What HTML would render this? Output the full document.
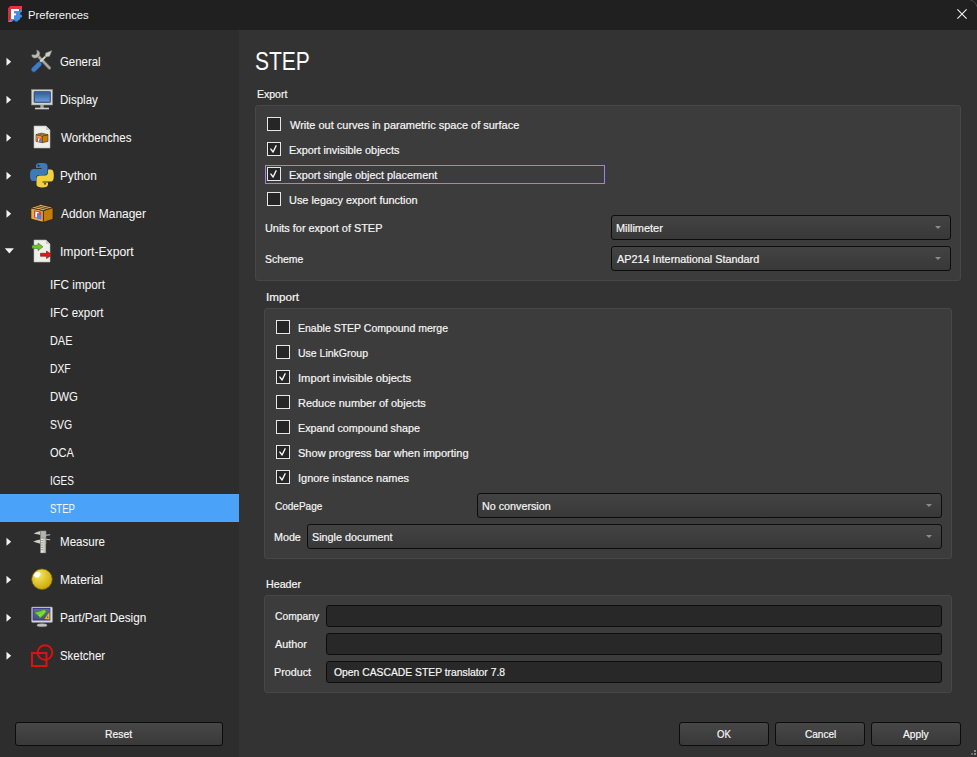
<!DOCTYPE html>
<html><head><meta charset="utf-8"><style>
*{box-sizing:border-box;margin:0;padding:0}
html,body{width:977px;height:757px;overflow:hidden;background:#333333}
body{position:relative;font-family:"Liberation Sans",sans-serif;font-size:11px;color:#f6f6f6}
.a,.btn{-webkit-text-stroke:0.2px currentColor}
.a{position:absolute;white-space:nowrap}
.t11{font-size:11px;line-height:12px}
.t12{font-size:12px;line-height:14px;-webkit-text-stroke:0.05px currentColor}
.t115{font-size:11.5px;line-height:13px}
.arr{position:absolute;width:0;height:0;border-top:4.2px solid transparent;border-bottom:4.2px solid transparent;border-left:4.8px solid #f0f0f0}
.arrd{position:absolute;width:0;height:0;border-left:4.5px solid transparent;border-right:4.5px solid transparent;border-top:5px solid #f0f0f0}
.btn{position:absolute;border:1px solid #0c0c0c;border-radius:3px;background:linear-gradient(#474747,#393939);text-align:center;color:#f0f0f0;font-size:11px}
.grp{position:absolute;border:1px solid #474747;border-radius:3px;background:#3c3c3c}
.cb{position:absolute;width:14px;height:14px;border:1.5px solid #e6e6e6;background:#262626}
.combo{position:absolute;border:1px solid #0d0d0d;border-radius:3px;background:linear-gradient(#434343,#383838)}
.dd{position:absolute;width:0;height:0;border-left:3.5px solid transparent;border-right:3.5px solid transparent;border-top:3.5px solid #8c8c8c}
.inp{position:absolute;border:1px solid #0d0d0d;border-radius:3px;background:#282828}
svg{position:absolute;overflow:visible}
</style></head><body>
<div class="a" style="left:0;top:0;width:977px;height:30px;background:#202020"></div>
<div class="a" style="left:0;top:30px;width:239px;height:727px;background:#2d2d2d"></div>
<svg style="left:6px;top:4px" width="20" height="20" viewBox="0 0 20 20">
  <path d="M2 4.5 L4.5 2 L16 2 L16 4.5 L13 7.2 L8 15 L5.6 18 L2 18 Z" fill="#e8424c"/>
  <path d="M2 4.5 L4.5 2 L4.5 18 L2 18 Z" fill="#c8343c"/>
  <path d="M4.5 2 L16 2 L13 5 L4.5 5 Z" fill="#dc3540"/>
  <path d="M2 18 L5 15 L5 18 Z" fill="#f45a62"/>
  <rect x="5" y="5" width="8" height="2.2" fill="#ffffff"/>
  <rect x="5" y="5" width="3" height="10" fill="#ffffff"/>
  <rect x="8" y="9.2" width="2.3" height="2.4" fill="#ffffff"/>
  <path d="M8 7.2 L13 7.2 L16 4.5 L16 7.8 L14.3 8.8 L14.3 10.4 L16 11.2 L16 13.2 L14.3 13.6 L14 15.6 L12.2 16.2 L11.6 17.6 L9.2 17.6 L8.6 16.2 L7.2 16.4 L5.6 18 L5 18 L5 15 L8 15 L8 11.6 L10.3 11.6 L10.3 9.2 L8 9.2 Z" fill="#3f8fe4"/>
</svg>
<div class="a t115" style="left:28.22px;top:9px;transform:scaleX(0.9790);transform-origin:0 0;color:#f2f2f2;-webkit-text-stroke:0">Preferences</div>
<svg style="left:957px;top:9px" width="10" height="10" viewBox="0 0 10 10"><path d="M0.4 0.4 L9.6 9.6 M9.6 0.4 L0.4 9.6" stroke="#f4f4f4" stroke-width="1.1"/></svg>
<svg style="left:957px;top:0px" width="20" height="20" viewBox="0 0 20 20"><path d="M13.5 0.4 A6.5 6.5 0 0 1 19.6 6.5" fill="none" stroke="#4a4a4a" stroke-width="1"/></svg>
<div class="a" style="left:974px;top:750px;width:2px;height:2px;background:#8a8a8a"></div><div class="a" style="left:971px;top:753px;width:2px;height:2px;background:#6a6a6a"></div><div class="a" style="left:974px;top:753px;width:2px;height:2px;background:#8a8a8a"></div>
<div class="a" style="left:0;top:494px;width:239px;height:28px;background:#4aa3f8"></div>
<svg width="0" height="0" style="left:0;top:0"><defs>
<linearGradient id="gDisp" x1="0" y1="0" x2="0" y2="1"><stop offset="0" stop-color="#34609c"/><stop offset="1" stop-color="#6a9ad8"/></linearGradient>
<linearGradient id="gPart" x1="0" y1="0" x2="0" y2="1"><stop offset="0" stop-color="#6c6c98"/><stop offset="1" stop-color="#4a4a88"/></linearGradient>
<radialGradient id="gMat" cx="0.35" cy="0.3" r="0.8"><stop offset="0" stop-color="#f8e860"/><stop offset="1" stop-color="#c8a000"/></radialGradient>
</defs></svg>
<svg style="left:0;top:42.0px" width="20" height="38" viewBox="0 0 20 38"><path d="M6.5 15.7 L11.2 19.75 L6.5 23.8 Z" fill="#f2f2f2"/></svg>
<svg style="left:26px;top:44px" width="32" height="36" viewBox="0 0 32 36">
<path d="M11.5 11.5 L23.5 24" stroke="#5a5a58" stroke-width="3.6" stroke-linecap="round"/>
<path d="M11.5 11.5 L23.5 24" stroke="#aaaaa4" stroke-width="2.4" stroke-linecap="round"/>
<path d="M5.5 11 C5.5 14 9 15 11.5 13.5 L13.5 11.5 C14.5 9 13.5 6.5 10.5 6 L11 9 L9.5 11 L7 10.5 Z" fill="#bdbdb6" stroke="#5a5a58" stroke-width="0.6"/>
<path d="M14 18 L21 11" stroke="#d8d8d2" stroke-width="1.8"/>
<path d="M19 13 L19.5 9 L26 6.5 L23.5 12.5 Z" fill="#cfcfc9" stroke="#6a6a66" stroke-width="0.5"/>
<path d="M7.8 25.6 L13.2 20.2" stroke="#24508a" stroke-width="5.4" stroke-linecap="round"/>
<path d="M7.8 25.6 L13.2 20.2" stroke="#3f7cc8" stroke-width="4.2" stroke-linecap="round"/>
</svg>
<div class="a t12" style="left:60.15px;top:55.0px;transform:scaleX(0.9499);transform-origin:0 0;">General</div>
<svg style="left:0;top:80.0px" width="20" height="38" viewBox="0 0 20 38"><path d="M6.5 15.7 L11.2 19.75 L6.5 23.8 Z" fill="#f2f2f2"/></svg>
<svg style="left:26px;top:82px" width="32" height="36" viewBox="0 0 32 36">
<rect x="5.5" y="7.5" width="21" height="15.5" fill="#d4d4ce" stroke="#8a8a86" stroke-width="0.6"/>
<rect x="8" y="9.5" width="16.5" height="11" rx="0.8" fill="#3a66a8" stroke="#2a3a50" stroke-width="0.6"/>
<rect x="9" y="10.5" width="14.5" height="9" fill="url(#gDisp)"/>
<rect x="14.3" y="23" width="3.4" height="3" fill="#a8a8a2"/>
<rect x="9" y="25.7" width="14" height="1.6" fill="#d0d0ca"/>
</svg>
<div class="a t12" style="left:60.14px;top:93.0px;transform:scaleX(0.9614);transform-origin:0 0;">Display</div>
<svg style="left:0;top:118.0px" width="20" height="38" viewBox="0 0 20 38"><path d="M6.5 15.7 L11.2 19.75 L6.5 23.8 Z" fill="#f2f2f2"/></svg>
<svg style="left:26px;top:120px" width="32" height="36" viewBox="0 0 32 36">
<path d="M8 6 L20 6 L24 10 L24 28 L8 28 Z" fill="#eeeeea" stroke="#b8b8b4" stroke-width="0.6"/>
<path d="M20 6 L20 10 L24 10" fill="#c8c8c4"/>
<path d="M10 14.6 L16.3 16 L16.3 22.7 L10 21.4 Z" fill="#e2a040" stroke="#3a2408" stroke-width="0.55"/>
<path d="M16.3 16 L22 14.6 L22 21.4 L16.3 22.7 Z" fill="#c47c10" stroke="#3a2408" stroke-width="0.55"/>
<path d="M10 14.6 L15.6 13.1 L22 14.6 L16.3 16 Z" fill="#e8b868" stroke="#3a2408" stroke-width="0.55"/>
<path d="M12 14 L18.5 15.4 M13.8 13.6 L20.2 15" stroke="#4a3010" stroke-width="0.5"/>
<path d="M11.2 17.4 L15.4 18.3 L15.4 22.6 L11.2 21.6 Z" fill="#e03a44"/>
<path d="M12 18.2 L14.2 18.7 L14.2 19.6 L13 19.4 L13 21.6 L12 21.4 Z" fill="#ffffff"/>
<path d="M13 19.8 L15.4 20.3 L15.4 22.6 L13 22 Z" fill="#3d8ee6"/>
</svg>
<div class="a t12" style="left:61.10px;top:131.0px;transform:scaleX(0.9635);transform-origin:0 0;">Workbenches</div>
<svg style="left:0;top:156.0px" width="20" height="38" viewBox="0 0 20 38"><path d="M6.5 15.7 L11.2 19.75 L6.5 23.8 Z" fill="#f2f2f2"/></svg>
<svg style="left:26px;top:158px" width="32" height="36" viewBox="0 0 32 36">
<path d="M10 10 L10 7.5 C10 5.5 12 5 15.5 5 C19 5 21.5 5.5 21.5 8 L21.5 14 C21.5 16 20 17 18 17 L13 17 C11 17 10 18.5 10 20.5 L10 23 L7 23 C5 23 4 21 4 17 C4 13 5 11 7.5 11 L15.5 11 L15.5 10 Z" fill="#3d7ab8"/>
<circle cx="12.6" cy="7.7" r="1" fill="#20304a"/>
<path d="M22 29 L22 26.5 C22 28.5 20 29.5 16.5 29.5 C13 29.5 10.5 28.5 10.5 26.5 L10.5 20.5 C10.5 18.5 12 17.5 14 17.5 L19 17.5 C21 17.5 22 16 22 14 L22 11.5 L25 11.5 C27 11.5 27.8 13.5 27.8 17.5 C27.8 21.5 27 23.5 24.5 23.5 L16.5 23.5 L16.5 24.5 L22 24.5 Z" fill="#f3d040"/>
<circle cx="19" cy="25.8" r="1" fill="#5a4a10"/>
</svg>
<div class="a t12" style="left:60.12px;top:169.0px;transform:scaleX(0.9837);transform-origin:0 0;">Python</div>
<svg style="left:0;top:194.0px" width="20" height="38" viewBox="0 0 20 38"><path d="M6.5 15.7 L11.2 19.75 L6.5 23.8 Z" fill="#f2f2f2"/></svg>
<svg style="left:26px;top:196px" width="32" height="36" viewBox="0 0 32 36">
<path d="M4.9 11.8 L17.4 14.6 L17.4 26.3 L4.9 23 Z" fill="#e8aa48" stroke="#2a1a08" stroke-width="0.7"/>
<path d="M17.4 14.6 L27 11.5 L27 23.2 L17.4 26.3 Z" fill="#c47c0c" stroke="#2a1a08" stroke-width="0.7"/>
<path d="M4.9 11.8 L14.3 8.4 L27 11.5 L17.4 14.6 Z" fill="#f0c270" stroke="#2a1a08" stroke-width="0.7"/>
<path d="M8.2 10.6 L20.8 13.4 M11.2 9.6 L23.6 12.4" stroke="#3a2408" stroke-width="0.8"/>
<path d="M8 14.2 L15.3 15.8 L15.3 23.4 L8 21.6 Z" fill="#e03a44"/>
<path d="M9.3 15.6 L12.8 16.3 L12.8 17.6 L11 17.3 L11 21.6 L9.3 21.2 Z" fill="#ffffff"/>
<path d="M11 18.2 L14.8 18.8 L14.8 23.3 L12 22.7 L10.8 23 Z" fill="#3d8ee6"/>
</svg>
<div class="a t12" style="left:61.10px;top:207.0px;transform:scaleX(0.9942);transform-origin:0 0;">Addon Manager</div>
<svg style="left:0;top:232.0px" width="20" height="38" viewBox="0 0 20 38"><path d="M4.8 16.2 L13.9 16.2 L9.35 21.5 Z" fill="#f2f2f2"/></svg>
<svg style="left:26px;top:234px" width="32" height="36" viewBox="0 0 32 36">
<path d="M8 6 L20 6 L24 10 L24 28 L8 28 Z" fill="#eeeeea" stroke="#b8b8b4" stroke-width="0.6"/>
<path d="M20 6 L20 10 L24 10" fill="#c8c8c4"/>
<path d="M6 11.2 L12 11.2 L12 9 L17 12.8 L12 16.6 L12 14.4 L6 14.4 Z" fill="#6cc828" stroke="#2a6010" stroke-width="0.5"/>
<path d="M14.5 19.3 L20.5 19.3 L20.5 17 L26 20.8 L20.5 24.6 L20.5 22.3 L14.5 22.3 Z" fill="#e01818" stroke="#600" stroke-width="0.5"/>
</svg>
<div class="a t12" style="left:60.09px;top:245.0px;transform:scaleX(1.0123);transform-origin:0 0;">Import-Export</div>
<div class="a t12" style="left:50.22px;top:278px;transform:scaleX(0.9821);transform-origin:0 0;">IFC import</div>
<div class="a t12" style="left:50.14px;top:306px;transform:scaleX(0.9553);transform-origin:0 0;">IFC export</div>
<div class="a t12" style="left:50.19px;top:334px;transform:scaleX(0.9079);transform-origin:0 0;">DAE</div>
<div class="a t12" style="left:50.24px;top:362px;transform:scaleX(0.8619);transform-origin:0 0;">DXF</div>
<div class="a t12" style="left:50.15px;top:390px;transform:scaleX(0.9516);transform-origin:0 0;">DWG</div>
<div class="a t12" style="left:50.23px;top:418px;transform:scaleX(0.8715);transform-origin:0 0;">SVG</div>
<div class="a t12" style="left:50.18px;top:446px;transform:scaleX(0.9189);transform-origin:0 0;">OCA</div>
<div class="a t12" style="left:50.26px;top:474px;transform:scaleX(0.8351);transform-origin:0 0;">IGES</div>
<div class="a t12" style="left:50.30px;top:502px;transform:scaleX(0.7961);transform-origin:0 0;">STEP</div>
<svg style="left:0;top:522px" width="20" height="38" viewBox="0 0 20 38"><path d="M6.5 15.7 L11.2 19.75 L6.5 23.8 Z" fill="#f2f2f2"/></svg>
<svg style="left:26px;top:524px" width="32" height="36" viewBox="0 0 32 36">
<path d="M7.8 9.6 C10 8.4 12 7.4 14.5 7 L14.5 11 C12 10.6 10 10.3 7.8 9.6 Z" fill="#cfcfc9"/>
<path d="M7.2 17.6 C9.5 16.6 12 16 14.5 15.6 L14.5 19.8 C12 19.4 9.5 18.6 7.2 17.6 Z" fill="#cfcfc9"/>
<rect x="14.3" y="6.9" width="5.8" height="13" fill="#b4b4ae" stroke="#6a6a66" stroke-width="0.4"/>
<rect x="14.3" y="14" width="5.6" height="15" fill="#c4c4be" stroke="#6a6a66" stroke-width="0.4"/>
<rect x="15" y="15" width="2.2" height="13.5" fill="#e6e6e0"/>
<path d="M15.2 16.5 h1.6 M15.2 18.8 h1.6 M15.2 21.1 h1.6 M15.2 23.4 h1.6 M15.2 25.7 h1.6" stroke="#5a5a56" stroke-width="0.7"/>
<path d="M20 11.2 L24.2 10.8 M20 15.2 L24.2 15.8" stroke="#c8c8c2" stroke-width="1.1"/>
</svg>
<div class="a t12" style="left:60.44px;top:535px;transform:scaleX(0.9630);transform-origin:0 0;">Measure</div>
<svg style="left:0;top:560px" width="20" height="38" viewBox="0 0 20 38"><path d="M6.5 15.7 L11.2 19.75 L6.5 23.8 Z" fill="#f2f2f2"/></svg>
<svg style="left:26px;top:562px" width="32" height="36" viewBox="0 0 32 36">
<circle cx="16" cy="17.2" r="10.3" fill="url(#gMat)" stroke="#7a6400" stroke-width="0.7"/>
<ellipse cx="11.5" cy="12.7" rx="3.4" ry="2.6" transform="rotate(-35 11.5 13)" fill="#ffffff"/>
</svg>
<div class="a t12" style="left:60.39px;top:573px;transform:scaleX(1.0072);transform-origin:0 0;">Material</div>
<svg style="left:0;top:598px" width="20" height="38" viewBox="0 0 20 38"><path d="M6.5 15.7 L11.2 19.75 L6.5 23.8 Z" fill="#f2f2f2"/></svg>
<svg style="left:26px;top:600px" width="32" height="36" viewBox="0 0 32 36">
<ellipse cx="16" cy="25.2" rx="5.2" ry="1.6" fill="#c4c4be" stroke="#77776f" stroke-width="0.4"/>
<rect x="5.5" y="6.9" width="21" height="15.5" rx="1.2" fill="#dcdcd6" stroke="#8a8a86" stroke-width="0.5"/>
<rect x="6.6" y="7.9" width="17.7" height="12.6" fill="#2c2c94"/>
<rect x="7.4" y="8.7" width="16.2" height="11" fill="url(#gPart)"/>
<path d="M8.3 12.6 L14.3 10.9 L18.1 9.3 L20.4 11.4 L18.1 14.7 L13.8 18.5 L12.8 16.2 Z" fill="#6ad82a" stroke="#2a7010" stroke-width="0.4"/>
<path d="M13.3 15.7 L19 11.4" stroke="#e8ffe0" stroke-width="0.6" stroke-dasharray="0.8 0.6"/>
<path d="M18.3 19 L23.5 12.1 L23.5 19.5 Z" fill="#e8c028" stroke="#806010" stroke-width="0.3"/>
<circle cx="21.6" cy="17.3" r="0.8" fill="#5a5a8a"/>
</svg>
<div class="a t12" style="left:60.42px;top:611px;transform:scaleX(0.9804);transform-origin:0 0;">Part/Part Design</div>
<svg style="left:0;top:636px" width="20" height="38" viewBox="0 0 20 38"><path d="M6.5 15.7 L11.2 19.75 L6.5 23.8 Z" fill="#f2f2f2"/></svg>
<svg style="left:26px;top:638px" width="32" height="36" viewBox="0 0 32 36">
<rect x="6" y="15" width="14.5" height="13" fill="none" stroke="#e01010" stroke-width="2"/>
<circle cx="19" cy="14.5" r="7.3" fill="none" stroke="#e01010" stroke-width="1.9"/>
</svg>
<div class="a t12" style="left:60.45px;top:649px;transform:scaleX(0.9510);transform-origin:0 0;">Sketcher</div>
<div class="btn" style="left:15px;top:722px;width:208px;height:24px"></div>
<div class="a t11" style="left:105.46px;top:728px;transform:scaleX(0.9412);transform-origin:0 0;">Reset</div>
<div class="a" style="left:255px;top:46px;font-size:25px;line-height:30px;color:#fafafa;transform:scaleX(0.84);transform-origin:0 0;-webkit-text-stroke:0">STEP</div>
<div class="a t11" style="left:256.64px;top:88px;transform:scaleX(0.9561);transform-origin:0 0;">Export</div>
<div class="grp" style="left:255px;top:105px;width:706px;height:176px"></div>
<div class="a t11" style="left:265.64px;top:291px;transform:scaleX(1.0615);transform-origin:0 0;">Import</div>
<div class="grp" style="left:264px;top:308px;width:688px;height:251px"></div>
<div class="a t11" style="left:265.73px;top:578px;transform:scaleX(0.9721);transform-origin:0 0;">Header</div>
<div class="grp" style="left:264px;top:595px;width:688px;height:98px"></div>
<div class="cb" style="left:267px;top:117px"></div>
<div class="a t11" style="left:289.60px;top:119px;transform:scaleX(0.9983);transform-origin:0 0;">Write out curves in parametric space of surface</div>
<div class="cb" style="left:267px;top:142px"><svg style="left:2px;top:2px" width="10" height="10" viewBox="0 0 10 10"><path d="M0.9 4.1 L3.1 7.0 L6.1 0.8" fill="none" stroke="#f4f4f4" stroke-width="1.45" stroke-linecap="round" stroke-linejoin="round"/></svg></div>
<div class="a t11" style="left:289.01px;top:144px;transform:scaleX(0.9875);transform-origin:0 0;">Export invisible objects</div>
<div class="cb" style="left:267px;top:167px"><svg style="left:2px;top:2px" width="10" height="10" viewBox="0 0 10 10"><path d="M0.9 4.1 L3.1 7.0 L6.1 0.8" fill="none" stroke="#f4f4f4" stroke-width="1.45" stroke-linecap="round" stroke-linejoin="round"/></svg></div>
<div class="a t11" style="left:289.01px;top:169px;transform:scaleX(0.9900);transform-origin:0 0;">Export single object placement</div>
<div class="cb" style="left:267px;top:192px"></div>
<div class="a t11" style="left:289.01px;top:194px;transform:scaleX(0.9922);transform-origin:0 0;">Use legacy export function</div>
<div class="a" style="left:265px;top:165px;width:340px;height:19px;border:1px solid #a77ee8"></div>
<div class="a t11" style="left:264.81px;top:222px;transform:scaleX(0.9898);transform-origin:0 0;">Units for export of STEP</div>
<div class="a t11" style="left:264.75px;top:253px;transform:scaleX(0.9499);transform-origin:0 0;">Scheme</div>
<div class="combo" style="left:611px;top:215px;width:340px;height:25px"><div class="dd" style="right:9.5px;top:10px"></div></div>
<div class="a t11" style="left:615.80px;top:222px;transform:scaleX(0.9957);transform-origin:0 0;">Millimeter</div>
<div class="combo" style="left:611px;top:246px;width:340px;height:25px"><div class="dd" style="right:9.5px;top:10px"></div></div>
<div class="a t11" style="left:616.80px;top:253px;transform:scaleX(0.9855);transform-origin:0 0;">AP214 International Standard</div>
<div class="cb" style="left:276px;top:320px"></div>
<div class="a t11" style="left:297.94px;top:322px;transform:scaleX(0.9560);transform-origin:0 0;">Enable STEP Compound merge</div>
<div class="cb" style="left:276px;top:345px"></div>
<div class="a t11" style="left:297.95px;top:347px;transform:scaleX(0.9547);transform-origin:0 0;">Use LinkGroup</div>
<div class="cb" style="left:276px;top:370px"><svg style="left:2px;top:2px" width="10" height="10" viewBox="0 0 10 10"><path d="M0.9 4.1 L3.1 7.0 L6.1 0.8" fill="none" stroke="#f4f4f4" stroke-width="1.45" stroke-linecap="round" stroke-linejoin="round"/></svg></div>
<div class="a t11" style="left:297.58px;top:372px;transform:scaleX(1.0171);transform-origin:0 0;">Import invisible objects</div>
<div class="cb" style="left:276px;top:395px"></div>
<div class="a t11" style="left:297.61px;top:397px;transform:scaleX(0.9945);transform-origin:0 0;">Reduce number of objects</div>
<div class="cb" style="left:276px;top:420px"></div>
<div class="a t11" style="left:297.62px;top:422px;transform:scaleX(0.9768);transform-origin:0 0;">Expand compound shape</div>
<div class="cb" style="left:276px;top:445px"><svg style="left:2px;top:2px" width="10" height="10" viewBox="0 0 10 10"><path d="M0.9 4.1 L3.1 7.0 L6.1 0.8" fill="none" stroke="#f4f4f4" stroke-width="1.45" stroke-linecap="round" stroke-linejoin="round"/></svg></div>
<div class="a t11" style="left:297.60px;top:447px;transform:scaleX(1.0036);transform-origin:0 0;">Show progress bar when importing</div>
<div class="cb" style="left:276px;top:470px"><svg style="left:2px;top:2px" width="10" height="10" viewBox="0 0 10 10"><path d="M0.9 4.1 L3.1 7.0 L6.1 0.8" fill="none" stroke="#f4f4f4" stroke-width="1.45" stroke-linecap="round" stroke-linejoin="round"/></svg></div>
<div class="a t11" style="left:297.60px;top:472px;transform:scaleX(0.9973);transform-origin:0 0;">Ignore instance names</div>
<div class="a t11" style="left:274.70px;top:500px;transform:scaleX(0.9093);transform-origin:0 0;">CodePage</div>
<div class="combo" style="left:477px;top:493px;width:465px;height:25px"><div class="dd" style="right:9.5px;top:10px"></div></div>
<div class="a t11" style="left:481.82px;top:500px;transform:scaleX(0.9771);transform-origin:0 0;">No conversion</div>
<div class="a t11" style="left:273.73px;top:531px;transform:scaleX(0.9740);transform-origin:0 0;">Mode</div>
<div class="combo" style="left:307px;top:524px;width:635px;height:25px"><div class="dd" style="right:9.5px;top:10px"></div></div>
<div class="a t11" style="left:311.62px;top:531px;transform:scaleX(0.9817);transform-origin:0 0;">Single document</div>
<div class="a t11" style="left:274.70px;top:610px;transform:scaleX(0.9353);transform-origin:0 0;">Company</div>
<div class="inp" style="left:326px;top:605px;width:616px;height:22px"></div>
<div class="a t11" style="left:274.70px;top:638px;transform:scaleX(0.9848);transform-origin:0 0;">Author</div>
<div class="inp" style="left:326px;top:633px;width:616px;height:22px"></div>
<div class="a t11" style="left:273.72px;top:666px;transform:scaleX(0.9789);transform-origin:0 0;">Product</div>
<div class="inp" style="left:326px;top:661px;width:616px;height:22px"></div>
<div class="a t11" style="left:333.80px;top:666px;transform:scaleX(0.9399);transform-origin:0 0;">Open CASCADE STEP translator 7.8</div>
<div class="btn" style="left:679px;top:722px;width:90px;height:24px"></div>
<div class="a t11" style="left:717.30px;top:728px;transform:scaleX(0.8698);transform-origin:0 0;">OK</div>
<div class="btn" style="left:775px;top:722px;width:90px;height:24px"></div>
<div class="a t11" style="left:804.80px;top:728px;transform:scaleX(0.9140);transform-origin:0 0;">Cancel</div>
<div class="btn" style="left:871px;top:722px;width:90px;height:24px"></div>
<div class="a t11" style="left:903.30px;top:728px;transform:scaleX(0.9273);transform-origin:0 0;">Apply</div>
</body></html>
